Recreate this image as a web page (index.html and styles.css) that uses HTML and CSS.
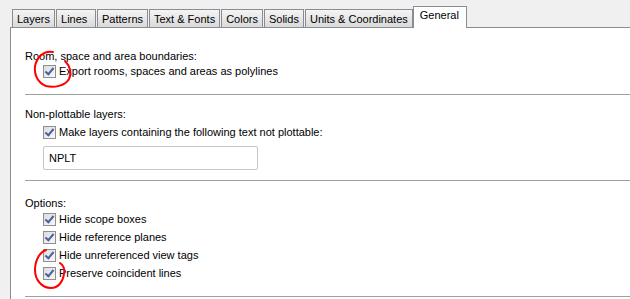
FILE: index.html
```html
<!DOCTYPE html>
<html lang="en">
<head>
    <meta charset="UTF-8">
    <title>Export Options - General</title>
    <link rel="stylesheet" href="styles.css">
</head>
<body>
    <div class="tabs">
        <span class="tab">Layers</span>
        <span class="tab">Lines</span>
        <span class="tab">Patterns</span>
        <span class="tab">Text &amp; Fonts</span>
        <span class="tab">Colors</span>
        <span class="tab">Solids</span>
        <span class="tab">Units &amp; Coordinates</span>
        <span class="tab active">General</span>
    </div>
    <div class="pane">
        <section class="group first">
            <div class="title">Room, space and area boundaries:</div>
            <label class="row"><span class="box"></span>Export rooms, spaces and areas as polylines</label>
        </section>
        <section class="group second">
            <div class="title">Non-plottable layers:</div>
            <label class="row"><span class="box"></span>Make layers containing the following text not plottable:</label>
            <div class="field">NPLT</div>
        </section>
        <section class="group third">
            <div class="title">Options:</div>
            <label class="row"><span class="box"></span>Hide scope boxes</label>
            <label class="row"><span class="box"></span>Hide reference planes</label>
            <label class="row"><span class="box"></span>Hide unreferenced view tags</label>
            <label class="row"><span class="box"></span>Preserve coincident lines</label>
        </section>
    </div>
    <svg class="marks" width="630" height="299" viewBox="0 0 630 299">
        <path d="M53 52 C44 50 37 57 35 66 C34 75 38 83 46 86 C54 88 65 86 69 79 C72 73 70 66 65 61" />
        <path d="M46 250 C40 252 35 260 35 270 C35 280 42 288 51 288 C58 288 63 282 64 274 C65 269 63 265 60 263" />
    </svg>
</body>
</html>
```

FILE: styles.css
```css
body {
    margin: 0;
    background-color: #f0f0f0;
    font-family: "Liberation Sans", Tahoma, Arial, sans-serif;
    font-size: 11px;
    color: #000;
    width: 630px;
    height: 299px;
    overflow: hidden;
}
.tabs {
    display: flex;
    align-items: flex-end;
    height: 27px;
    padding-left: 12px;
}
.tab {
    min-width: 30px;
    height: 17px;
    line-height: 18px;
    padding: 0 4px;
    margin-right: 1px;
    border: 1px solid #898c95;
    border-bottom: none;
    background: linear-gradient(#f4f4f4, #dadada);
    white-space: nowrap;
}
.tab.active {
    height: 21px;
    line-height: 17px;
    padding: 0 7px 0 6px;
    margin-left: -1px;
    margin-bottom: -1px;
    background: #fff;
    position: relative;
}
.pane {
    margin-left: 10px;
    border-left: 1px solid #898c95;
    border-top: 1px solid #898c95;
    background-color: #fff;
    height: 272px;
}
.group {
    margin-left: 14px;
    border-bottom: 1px solid #a0a0a0;
}
.first {
    padding-top: 21px;
    padding-bottom: 15px;
}
.second {
    padding-top: 12px;
    padding-bottom: 10px;
}
.third {
    padding-top: 15px;
    padding-bottom: 14px;
}
.title {
    line-height: 14px;
    height: 14px;
}
.row {
    display: flex;
    align-items: center;
    height: 16px;
    padding-left: 18px;
}
.second .row {
    margin-top: 3px;
}
.third .row {
    height: 18px;
}
.box {
    width: 11px;
    height: 11px;
    margin-right: 3px;
    border: 1px solid #8e8f8f;
    background: linear-gradient(135deg, #dcdcdc, #f8f8f8);
    position: relative;
    flex-shrink: 0;
}
.box::after {
    content: "";
    position: absolute;
    left: 3px;
    top: 0px;
    width: 3px;
    height: 7px;
    border-right: 2px solid #4a5f9e;
    border-bottom: 2px solid #4a5f9e;
    transform: rotate(40deg);
}
.field {
    margin: 6px 0 0 18px;
    width: 208px;
    height: 22px;
    line-height: 22px;
    padding-left: 5px;
    border: 1px solid #c5c5c5;
    border-radius: 2px;
}
.marks {
    position: absolute;
    left: 0;
    top: 0;
    pointer-events: none;
}
.marks path {
    fill: none;
    stroke: #f00;
    stroke-width: 2;
    stroke-linecap: round;
}
```
